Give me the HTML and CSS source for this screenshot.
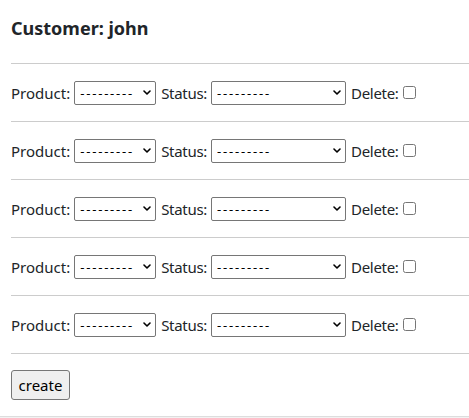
FILE: index.html
```html
<!DOCTYPE html>
<html>
<head>
<meta charset="utf-8">
<link rel="stylesheet" href="styles.css">
</head>
<body>
<div class="page">
  <h1 class="title">Customer: john</h1>
  <hr class="rule">
  <form class="formset">
    <div class="row">
      <label class="lbl">Product:</label>
      <span class="sel sel-product"><select><option>---------</option></select><svg class="chev" viewBox="0 0 8 5"><path d="M1 1l3 3 3-3"/></svg></span>
      <label class="lbl lbl-next lbl-status">Status:</label>
      <span class="sel sel-status"><select><option>---------</option></select><svg class="chev" viewBox="0 0 8 5"><path d="M1 1l3 3 3-3"/></svg></span>
      <label class="lbl lbl-next lbl-delete">Delete:</label>
      <input class="chk" type="checkbox">
    </div>
    <hr class="rule">
    <div class="row">
      <label class="lbl">Product:</label>
      <span class="sel sel-product"><select><option>---------</option></select><svg class="chev" viewBox="0 0 8 5"><path d="M1 1l3 3 3-3"/></svg></span>
      <label class="lbl lbl-next lbl-status">Status:</label>
      <span class="sel sel-status"><select><option>---------</option></select><svg class="chev" viewBox="0 0 8 5"><path d="M1 1l3 3 3-3"/></svg></span>
      <label class="lbl lbl-next lbl-delete">Delete:</label>
      <input class="chk" type="checkbox">
    </div>
    <hr class="rule">
    <div class="row">
      <label class="lbl">Product:</label>
      <span class="sel sel-product"><select><option>---------</option></select><svg class="chev" viewBox="0 0 8 5"><path d="M1 1l3 3 3-3"/></svg></span>
      <label class="lbl lbl-next lbl-status">Status:</label>
      <span class="sel sel-status"><select><option>---------</option></select><svg class="chev" viewBox="0 0 8 5"><path d="M1 1l3 3 3-3"/></svg></span>
      <label class="lbl lbl-next lbl-delete">Delete:</label>
      <input class="chk" type="checkbox">
    </div>
    <hr class="rule">
    <div class="row">
      <label class="lbl">Product:</label>
      <span class="sel sel-product"><select><option>---------</option></select><svg class="chev" viewBox="0 0 8 5"><path d="M1 1l3 3 3-3"/></svg></span>
      <label class="lbl lbl-next lbl-status">Status:</label>
      <span class="sel sel-status"><select><option>---------</option></select><svg class="chev" viewBox="0 0 8 5"><path d="M1 1l3 3 3-3"/></svg></span>
      <label class="lbl lbl-next lbl-delete">Delete:</label>
      <input class="chk" type="checkbox">
    </div>
    <hr class="rule">
    <div class="row">
      <label class="lbl">Product:</label>
      <span class="sel sel-product"><select><option>---------</option></select><svg class="chev" viewBox="0 0 8 5"><path d="M1 1l3 3 3-3"/></svg></span>
      <label class="lbl lbl-next lbl-status">Status:</label>
      <span class="sel sel-status"><select><option>---------</option></select><svg class="chev" viewBox="0 0 8 5"><path d="M1 1l3 3 3-3"/></svg></span>
      <label class="lbl lbl-next lbl-delete">Delete:</label>
      <input class="chk" type="checkbox">
    </div>
    <hr class="rule">
    <div class="actions">
      <button class="btn" type="button">create</button>
    </div>
  </form>
</div>
<footer class="foot"></footer>
</body>
</html>
```
FILE: styles.css
```css
html, body {
  margin: 0;
  padding: 0;
  background: #fff;
}
body {
  font-family: "Noto Sans", "Open Sans", sans-serif;
  color: #212529;
}
.page {
  padding-left: 11px;
}
.title {
  margin: 0;
  padding-top: 16px;
  height: 63px;
  box-sizing: border-box;
  font-size: 18px;
  font-weight: 700;
  line-height: 25px;
}
.rule {
  margin: 0;
  border: 0;
  height: 1px;
  background: #cccccc;
}
.formset {
  margin: 0;
}
.row {
  display: flex;
  align-items: center;
  height: 24px;
  padding: 17px 0 16px;
}
.lbl {
  font-size: 15px;
  line-height: 24px;
  margin-right: 4px;
}
.lbl-next {
  margin-left: 5px;
}
.lbl-status {
  letter-spacing: -0.3px;
}
.lbl-delete {
  letter-spacing: -0.3px;
  margin-right: 4px;
}
.sel {
  position: relative;
  display: block;
  height: 24px;
}
.sel select {
  appearance: none;
  -webkit-appearance: none;
  box-sizing: border-box;
  height: 24px;
  margin: 0;
  padding: 0 0 0 5px;
  border: 1px solid #767676;
  border-radius: 2px;
  background: #fff;
  color: #000;
  font-family: "Noto Sans", "Open Sans", sans-serif;
  font-size: 13px;
  letter-spacing: 1.8px;
  line-height: 22px;
}
.sel-product select {
  width: 82px;
}
.sel-status select {
  width: 135px;
}
.chev {
  position: absolute;
  right: 5px;
  top: 9px;
  width: 8px;
  height: 5px;
  pointer-events: none;
}
.chev path {
  fill: none;
  stroke: #000;
  stroke-width: 1.6;
  stroke-linecap: round;
  stroke-linejoin: round;
}
.chk {
  margin: 0 0 2px 0;
  width: 13px;
  height: 13px;
}
.actions {
  padding: 16px 0 16px;
}
.btn {
  box-sizing: border-box;
  height: 30px;
  width: 59px;
  margin: 0;
  padding: 0;
  border: 1px solid #767676;
  border-radius: 3px;
  background: #efefef;
  color: #000;
  font-family: "Noto Sans", "Open Sans", sans-serif;
  font-size: 15px;
}
.foot {
  border-top: 1px solid #dddddd;
  background: #f2f2f2;
  height: 40px;
}
```
